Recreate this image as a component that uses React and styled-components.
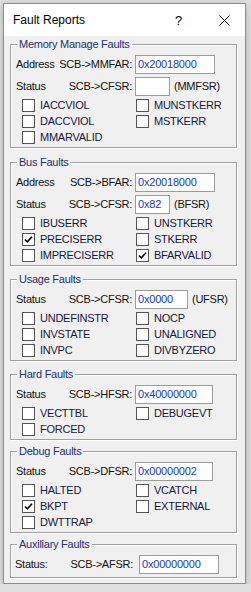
import React from 'react';
import styled, { createGlobalStyle } from 'styled-components';

const GlobalStyle = createGlobalStyle`
  html, body {
    margin: 0;
    padding: 0;
    background: #e1e1e1;
  }
  body {
    font-family: "Liberation Sans", Arial, sans-serif;
    font-size: 11px;
    letter-spacing: -0.25px;
    color: #111;
  }
`;

const Window = styled.div`
  margin: 3px 0 0 3px;
  width: 243px;
  height: 581px;
  box-sizing: border-box;
  border: 1px solid #8c8c8c;
  background: #f0f0f0;
  box-shadow: 0 2px 8px rgba(0, 0, 0, 0.25);
  display: flex;
  flex-direction: column;
`;

const TitleBar = styled.div`
  height: 32px;
  flex-shrink: 0;
  background: #fff;
  display: flex;
  align-items: center;
  padding-left: 9px;
`;

const Title = styled.div`
  flex: 1;
  font-size: 12px;
  letter-spacing: 0;
  color: #000;
`;

const HelpButton = styled.span`
  font-size: 13px;
  color: #000;
  margin-right: 37px;
`;

const CloseButton = styled.svg`
  width: 11px;
  height: 11px;
  margin-right: 15px;
`;

const Body = styled.div`
  padding: 8px 8px 0 6px;
  display: flex;
  flex-direction: column;
`;

const Group = styled.div`
  position: relative;
  margin-top: ${(p) => p.$mt || 0}px;
  border: 1px solid #a0a0a0;
  box-shadow: inset 1px 1px 0 #fff, 1px 1px 0 #fff;
  padding: 8px 0 2px;
`;

const Legend = styled.span`
  position: absolute;
  top: -8px;
  left: 6px;
  padding: 0 2px;
  line-height: 14px;
  background: #f0f0f0;
  color: #1c3275;
`;

const FieldRow = styled.div`
  height: 22px;
  display: flex;
  align-items: center;
  padding-left: ${(p) => p.$pl ?? 5}px;
`;

const LabelCell = styled.div`
  width: ${(p) => p.$w || 116}px;
  display: flex;
  justify-content: space-between;
  white-space: nowrap;
`;

const ValueBox = styled.div`
  margin-left: ${(p) => p.$ml || 3}px;
  width: ${(p) => p.$w}px;
  height: 19px;
  box-sizing: border-box;
  border: 1px solid #9c9c9c;
  background: #fff;
  color: #1733d6;
  padding-left: 2px;
  line-height: 17px;
  font-size: 11px;
  letter-spacing: -0.2px;
  overflow: hidden;
`;

const Suffix = styled.span`
  margin-left: 4px;
`;

const CheckGrid = styled.div`
  display: grid;
  grid-template-columns: 114px 1fr;
  grid-auto-rows: 16px;
  padding-left: 11px;
`;

const CheckItem = styled.label`
  display: flex;
  align-items: center;
  color: #16183e;
  white-space: nowrap;
`;

const Box = styled.span`
  width: 13px;
  height: 13px;
  box-sizing: border-box;
  border: 1px solid #555;
  background: #fff;
  display: flex;
  align-items: center;
  justify-content: center;
  margin-right: 5px;
`;

function CheckBox({ label, checked }) {
  return (
    <CheckItem>
      <Box>
        {checked && (
          <svg width="11" height="11" viewBox="0 0 11 11">
            <path d="M2 5.5 L4.3 7.8 L9 2.8" fill="none" stroke="#000" strokeWidth="1.6" />
          </svg>
        )}
      </Box>
      {label}
    </CheckItem>
  );
}

function Field({ name, reg, value, width, suffix, labelWidth, pl, ml }) {
  return (
    <FieldRow $pl={pl}>
      <LabelCell $w={labelWidth}>
        <span>{name}</span>
        <span>{reg}</span>
      </LabelCell>
      <ValueBox $w={width} $ml={ml}>{value}</ValueBox>
      {suffix && <Suffix>{suffix}</Suffix>}
    </FieldRow>
  );
}

const groups = [
  {
    title: 'Memory Manage Faults',
    mt: 0,
    fields: [
      { name: 'Address', reg: 'SCB->MMFAR:', value: '0x20018000', width: 80 },
      { name: 'Status', reg: 'SCB->CFSR:', value: '', width: 35, suffix: '(MMFSR)' },
    ],
    checks: [['IACCVIOL'], ['MUNSTKERR'], ['DACCVIOL'], ['MSTKERR'], ['MMARVALID']],
  },
  {
    title: 'Bus Faults',
    mt: 14,
    fields: [
      { name: 'Address', reg: 'SCB->BFAR:', value: '0x20018000', width: 80 },
      { name: 'Status', reg: 'SCB->CFSR:', value: '0x82', width: 35, suffix: '(BFSR)' },
    ],
    checks: [['IBUSERR'], ['UNSTKERR'], ['PRECISERR', true], ['STKERR'], ['IMPRECISERR'], ['BFARVALID', true]],
  },
  {
    title: 'Usage Faults',
    mt: 13,
    fields: [{ name: 'Status', reg: 'SCB->CFSR:', value: '0x0000', width: 53, suffix: '(UFSR)' }],
    checks: [['UNDEFINSTR'], ['NOCP'], ['INVSTATE'], ['UNALIGNED'], ['INVPC'], ['DIVBYZERO']],
  },
  {
    title: 'Hard Faults',
    mt: 13,
    fields: [{ name: 'Status', reg: 'SCB->HFSR:', value: '0x40000000', width: 78 }],
    checks: [['VECTTBL'], ['DEBUGEVT'], ['FORCED']],
  },
  {
    title: 'Debug Faults',
    mt: 11,
    fields: [{ name: 'Status', reg: 'SCB->DFSR:', value: '0x00000002', width: 78 }],
    checks: [['HALTED'], ['VCATCH'], ['BKPT', true], ['EXTERNAL'], ['DWTTRAP']],
  },
  {
    title: 'Auxiliary Faults',
    mt: 11,
    fields: [
      { name: 'Status:', reg: 'SCB->AFSR:', value: '0x00000000', width: 80, labelWidth: 118, pl: 4, ml: 6 },
    ],
    checks: [],
  },
];

export default function App() {
  return (
    <>
      <GlobalStyle />
      <Window>
        <TitleBar>
          <Title>Fault Reports</Title>
          <HelpButton>?</HelpButton>
          <CloseButton viewBox="0 0 11 11">
            <path d="M0.5 0.5 L10.5 10.5 M10.5 0.5 L0.5 10.5" stroke="#000" strokeWidth="1" />
          </CloseButton>
        </TitleBar>
        <Body>
          {groups.map((g) => (
            <Group key={g.title} $mt={g.mt}>
              <Legend>{g.title}</Legend>
              {g.fields.map((f) => (
                <Field key={f.reg} {...f} />
              ))}
              {g.checks.length > 0 && (
                <CheckGrid>
                  {g.checks.map(([label, checked]) => (
                    <CheckBox key={label} label={label} checked={checked} />
                  ))}
                </CheckGrid>
              )}
            </Group>
          ))}
        </Body>
      </Window>
    </>
  );
}
